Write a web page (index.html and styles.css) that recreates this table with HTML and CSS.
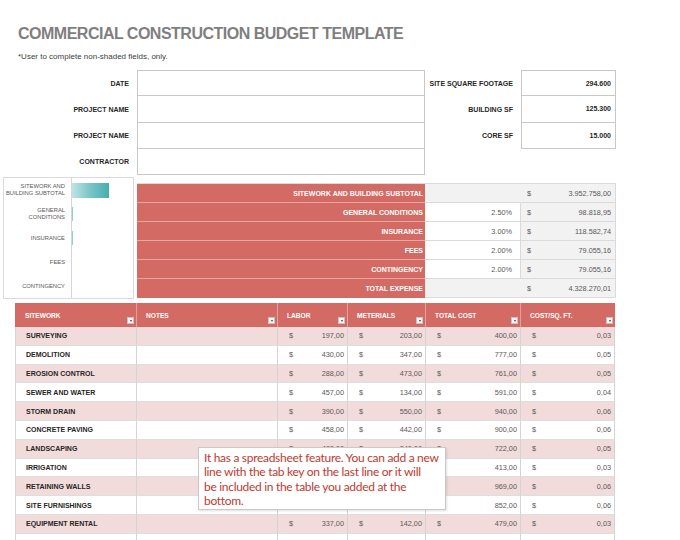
FILE: index.html
```html
<!DOCTYPE html>
<html>
<head>
<meta charset="utf-8">
<link rel="stylesheet" href="styles.css">
</head>
<body>
<div class="page">
  <h1 class="title">COMMERCIAL CONSTRUCTION BUDGET TEMPLATE</h1>
  <p class="note">*User to complete non-shaded fields, only.</p>

  <section class="info">
    <div class="lbl">DATE</div>
    <div class="field first"></div>
    <div class="lbl">SITE SQUARE FOOTAGE</div>
    <div class="val first">294.600</div>

    <div class="lbl">PROJECT NAME</div>
    <div class="field"></div>
    <div class="lbl">BUILDING SF</div>
    <div class="val">125.300</div>

    <div class="lbl">PROJECT NAME</div>
    <div class="field"></div>
    <div class="lbl">CORE SF</div>
    <div class="val">15.000</div>

    <div class="lbl">CONTRACTOR</div>
    <div class="field"></div>
    <div></div>
    <div></div>
  </section>

  <section class="summary">
    <div class="chart">
      <div class="clbl">SITEWORK AND<br>BUILDING SUBTOTAL</div>
      <div class="cplot"><div class="bar bar-main"></div></div>
      <div class="clbl">GENERAL<br>CONDITIONS</div>
      <div class="cplot"><div class="bar bar-thin"></div></div>
      <div class="clbl">INSURANCE</div>
      <div class="cplot"><div class="bar bar-thin"></div></div>
      <div class="clbl">FEES</div>
      <div class="cplot"></div>
      <div class="clbl">CONTINGENCY</div>
      <div class="cplot"></div>
    </div>

    <div class="totals">
      <div class="srow full">
        <div class="red">SITEWORK AND BUILDING SUBTOTAL</div>
        <div class="pct"></div>
        <div class="amt"><span>$</span><span>3.952.758,00</span></div>
      </div>
      <div class="srow">
        <div class="red">GENERAL CONDITIONS</div>
        <div class="pct">2.50%</div>
        <div class="amt"><span>$</span><span>98.818,95</span></div>
      </div>
      <div class="srow">
        <div class="red">INSURANCE</div>
        <div class="pct">3.00%</div>
        <div class="amt"><span>$</span><span>118.582,74</span></div>
      </div>
      <div class="srow">
        <div class="red">FEES</div>
        <div class="pct">2.00%</div>
        <div class="amt"><span>$</span><span>79.055,16</span></div>
      </div>
      <div class="srow">
        <div class="red">CONTINGENCY</div>
        <div class="pct">2.00%</div>
        <div class="amt"><span>$</span><span>79.055,16</span></div>
      </div>
      <div class="srow full last">
        <div class="red">TOTAL EXPENSE</div>
        <div class="pct"></div>
        <div class="amt"><span>$</span><span>4.328.270,01</span></div>
      </div>
    </div>
  </section>

  <section class="budget">
    <div class="hrow">
      <div class="h"><span>SITEWORK</span><i class="dd"></i></div>
      <div class="h"><span>NOTES</span><i class="dd"></i></div>
      <div class="h"><span>LABOR</span><i class="dd"></i></div>
      <div class="h"><span>METERIALS</span><i class="dd"></i></div>
      <div class="h"><span>TOTAL COST</span><i class="dd"></i></div>
      <div class="h"><span>COST/SQ. FT.</span><i class="dd"></i></div>
    </div>
    <div class="row pink"><div class="c name">SURVEYING</div><div class="c"></div><div class="c m"><span>$</span><span>197,00</span></div><div class="c m"><span>$</span><span>203,00</span></div><div class="c m"><span>$</span><span>400,00</span></div><div class="c m"><span>$</span><span>0,03</span></div></div>
    <div class="row"><div class="c name">DEMOLITION</div><div class="c"></div><div class="c m"><span>$</span><span>430,00</span></div><div class="c m"><span>$</span><span>347,00</span></div><div class="c m"><span>$</span><span>777,00</span></div><div class="c m"><span>$</span><span>0,05</span></div></div>
    <div class="row pink"><div class="c name">EROSION CONTROL</div><div class="c"></div><div class="c m"><span>$</span><span>288,00</span></div><div class="c m"><span>$</span><span>473,00</span></div><div class="c m"><span>$</span><span>761,00</span></div><div class="c m"><span>$</span><span>0,05</span></div></div>
    <div class="row"><div class="c name">SEWER AND WATER</div><div class="c"></div><div class="c m"><span>$</span><span>457,00</span></div><div class="c m"><span>$</span><span>134,00</span></div><div class="c m"><span>$</span><span>591,00</span></div><div class="c m"><span>$</span><span>0,04</span></div></div>
    <div class="row pink"><div class="c name">STORM DRAIN</div><div class="c"></div><div class="c m"><span>$</span><span>390,00</span></div><div class="c m"><span>$</span><span>550,00</span></div><div class="c m"><span>$</span><span>940,00</span></div><div class="c m"><span>$</span><span>0,06</span></div></div>
    <div class="row"><div class="c name">CONCRETE PAVING</div><div class="c"></div><div class="c m"><span>$</span><span>458,00</span></div><div class="c m"><span>$</span><span>442,00</span></div><div class="c m"><span>$</span><span>900,00</span></div><div class="c m"><span>$</span><span>0,06</span></div></div>
    <div class="row pink"><div class="c name">LANDSCAPING</div><div class="c"></div><div class="c m"><span>$</span><span>482,00</span></div><div class="c m"><span>$</span><span>240,00</span></div><div class="c m"><span>$</span><span>722,00</span></div><div class="c m"><span>$</span><span>0,05</span></div></div>
    <div class="row"><div class="c name">IRRIGATION</div><div class="c"></div><div class="c m"><span>$</span><span>209,00</span></div><div class="c m"><span>$</span><span>204,00</span></div><div class="c m"><span>$</span><span>413,00</span></div><div class="c m"><span>$</span><span>0,03</span></div></div>
    <div class="row pink"><div class="c name">RETAINING WALLS</div><div class="c"></div><div class="c m"><span>$</span><span>515,00</span></div><div class="c m"><span>$</span><span>454,00</span></div><div class="c m"><span>$</span><span>969,00</span></div><div class="c m"><span>$</span><span>0,06</span></div></div>
    <div class="row"><div class="c name">SITE FURNISHINGS</div><div class="c"></div><div class="c m"><span>$</span><span>347,00</span></div><div class="c m"><span>$</span><span>505,00</span></div><div class="c m"><span>$</span><span>852,00</span></div><div class="c m"><span>$</span><span>0,06</span></div></div>
    <div class="row pink"><div class="c name">EQUIPMENT RENTAL</div><div class="c"></div><div class="c m"><span>$</span><span>337,00</span></div><div class="c m"><span>$</span><span>142,00</span></div><div class="c m"><span>$</span><span>479,00</span></div><div class="c m"><span>$</span><span>0,03</span></div></div>
    <div class="row"><div class="c name">FENCING</div><div class="c"></div><div class="c m"><span>$</span><span>250,00</span></div><div class="c m"><span>$</span><span>310,00</span></div><div class="c m"><span>$</span><span>560,00</span></div><div class="c m"><span>$</span><span>0,04</span></div></div>
  </section>

  <div class="tooltip">It has a spreadsheet feature. You can add a new<br>line with the tab key on the last line or it will<br>be included in the table you added at the<br>bottom.</div>
</div>
</body>
</html>
```

FILE: styles.css
```css
* { box-sizing: border-box; margin: 0; padding: 0; }
body {
  margin: 0;
  background: #fff;
  font-family: "Liberation Sans", Arial, sans-serif;
  color: #262626;
}
.page {
  position: relative;
  width: 680px;
  height: 540px;
  padding-top: 24px;
  overflow: hidden;
}
.title {
  margin-left: 18px;
  font-size: 16px;
  line-height: 20px;
  font-weight: 700;
  color: #7f7f7f;
  letter-spacing: -0.5px;
  white-space: nowrap;
}
.note {
  margin: 8px 0 0 18px;
  font-size: 8px;
  line-height: 10px;
  color: #404040;
}

/* info form */
.info {
  margin-top: 8px;
  display: grid;
  grid-template-columns: 137px 288px 96px 95px;
  grid-template-rows: repeat(4, 26.25px);
}
.lbl {
  display: flex;
  align-items: center;
  justify-content: flex-end;
  padding-right: 8px;
  font-size: 7px;
  font-weight: 700;
  white-space: nowrap;
  color: #262626;
}
.field, .val {
  border: 1px solid #c8c8c8;
  border-top: none;
}
.field.first, .val.first { border-top: 1px solid #c8c8c8; }
.val {
  display: flex;
  align-items: center;
  justify-content: flex-end;
  padding-right: 4px;
  font-size: 7px;
  font-weight: 700;
}

/* summary */
.summary {
  margin-top: 2px;
  display: flex;
  align-items: flex-start;
}
.chart {
  margin-left: 3px;
  width: 131px;
  height: 122px;
  border: 1px solid #dadada;
  display: grid;
  grid-template-columns: 67px 1fr;
  grid-template-rows: repeat(5, 1fr);
}
.clbl {
  display: flex;
  align-items: center;
  justify-content: flex-end;
  text-align: right;
  padding-right: 6px;
  font-size: 5.8px;
  line-height: 7px;
  color: #595959;
  white-space: nowrap;
}
.cplot {
  border-left: 1px solid #d6d6d6;
  display: flex;
  align-items: center;
}
.bar { height: 15px; }
.bar-main {
  width: 37px;
  background: linear-gradient(to right, #bfe4e4, #7cc8c9 45%, #45adaf);
}
.bar-thin {
  width: 1px;
  height: 14px;
  background: #8fd0d0;
}

.totals {
  margin-left: 3px;
  margin-top: 6px;
  width: 479px;
  border-top: 1px solid #dadada;
}
.srow {
  display: grid;
  grid-template-columns: 288px 95px 96px;
  height: 19px;
}
.red {
  background: #d36a64;
  color: #fff;
  font-size: 7px;
  font-weight: 700;
  display: flex;
  align-items: center;
  justify-content: flex-end;
  padding-right: 2px;
  border-bottom: 1px solid #e6a7a3;
  white-space: nowrap;
}
.srow.last .red { border-bottom: none; }
.pct {
  display: flex;
  align-items: center;
  justify-content: flex-end;
  padding-right: 8px;
  font-size: 7.3px;
  color: #595959;
  background: #fff;
  border-bottom: 1px solid #dadada;
}
.amt {
  display: flex;
  align-items: center;
  justify-content: space-between;
  padding: 0 4px 0 6px;
  font-size: 7.3px;
  color: #595959;
  background: #f2f2f2;
  border-left: 1px solid #dadada;
  border-right: 1px solid #dadada;
  border-bottom: 1px solid #dadada;
}
.srow.full .pct { background: #f2f2f2; }
.srow.full .amt { border-left-color: #f2f2f2; }

/* budget table */
.budget {
  margin: 4px 0 0 15px;
  width: 600px;
  display: grid;
  grid-template-columns: 122px 141px 70px 78px 95px 94px;
  grid-template-rows: 24px;
  grid-auto-rows: 18.8px;
}
.hrow, .row { display: contents; }
.h {
  background: #d36a64;
  color: #fff;
  font-size: 6.6px;
  font-weight: 700;
  display: flex;
  align-items: center;
  justify-content: space-between;
  padding-left: 9px;
  border-right: 1px solid #e3a09c;
  white-space: nowrap;
}
.h:first-child { padding-left: 10px; }
.h:last-child { border-right: none; }
.dd {
  align-self: flex-end;
  margin: 0 2px 3px 0;
  width: 7px;
  height: 7px;
  background: #f3f3f3;
  border: 1px solid #c4c4c4;
  display: flex;
  align-items: center;
  justify-content: center;
}
.dd::after {
  content: "";
  border-left: 1.5px solid transparent;
  border-right: 1.5px solid transparent;
  border-top: 2px solid #444;
}
.c {
  border-right: 1px solid #d4d4d4;
  border-bottom: 1px solid #dedede;
  background: #fff;
  font-size: 7.3px;
  color: #595959;
  display: flex;
  align-items: center;
  white-space: nowrap;
}
.row .c:first-child { border-left: 1px solid #d4d4d4; }
.row.pink .c { background: #f2dcdb; }
.c.name {
  padding-left: 10px;
  font-size: 7px;
  font-weight: 700;
  color: #262626;
}
.c.m {
  justify-content: space-between;
  padding: 0 3px 0 11px;
}

/* tooltip */
.tooltip {
  position: absolute;
  left: 198px;
  top: 447px;
  width: 248px;
  height: 63px;
  background: #fff;
  border: 1px solid #c9c9c9;
  box-shadow: 1px 1px 2px rgba(0, 0, 0, 0.12);
  padding: 3px 0 0 5px;
  font-family: Lato, "Open Sans", sans-serif;
  font-size: 12px;
  line-height: 14.3px;
  letter-spacing: -0.3px;
  color: #c0392f;
  white-space: nowrap;
}
```
